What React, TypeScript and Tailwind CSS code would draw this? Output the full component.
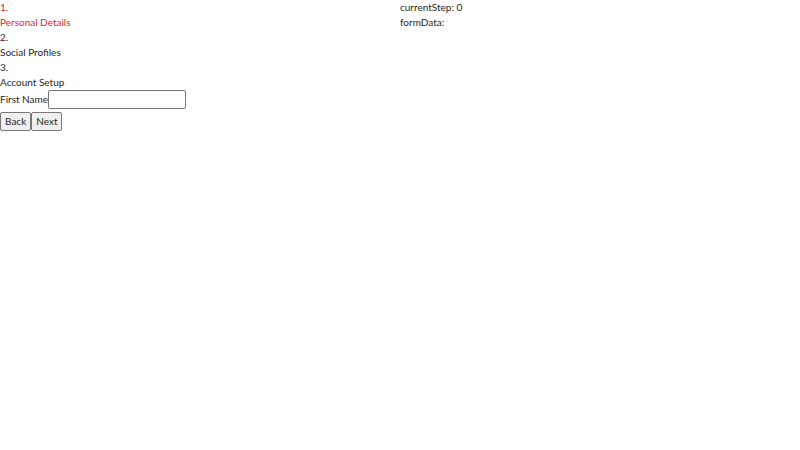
import React, { useState } from 'react';

const steps = ['Personal Details', 'Social Profiles', 'Account Setup'];

export default function App() {
  const [currentStep, setCurrentStep] = useState(0);
  const [firstName, setFirstName] = useState('');

  return (
    <div className="flex text-[10px] leading-[15px] text-[#262626]" style={{ fontFamily: 'Lato, sans-serif' }}>
      <div className="w-[400px]">
        {/* Steps */}
        {steps.map((s, i) => (
          <div key={s} className={i === currentStep ? 'text-[#d42a35]' : ''}>
            <div>{i + 1}.</div>
            <div>{s}</div>
          </div>
        ))}

        {/* Form */}
        <div className="flex items-center h-[19px]">
          <label>First Name</label>
          <input
            type="text"
            value={firstName}
            onChange={(e) => setFirstName(e.target.value)}
            className="w-[138px] h-[19px] bg-white border border-[#767676] rounded-[2px] px-1 text-[10px] outline-none"
          />
        </div>
        <div className="flex mt-[3px]">
          <button
            onClick={() => setCurrentStep(Math.max(0, currentStep - 1))}
            className="h-[19px] px-[4px] bg-[#efefef] border border-[#767676] rounded-[2px] text-[10px] leading-[15px]"
          >
            Back
          </button>
          <button
            onClick={() => setCurrentStep(Math.min(2, currentStep + 1))}
            className="h-[19px] px-[4px] bg-[#efefef] border border-[#767676] rounded-[2px] text-[10px] leading-[15px]"
          >
            Next
          </button>
        </div>
      </div>

      {/* Debug */}
      <div>
        <div>currentStep: {currentStep}</div>
        <div>formData: </div>
      </div>
    </div>
  );
}
